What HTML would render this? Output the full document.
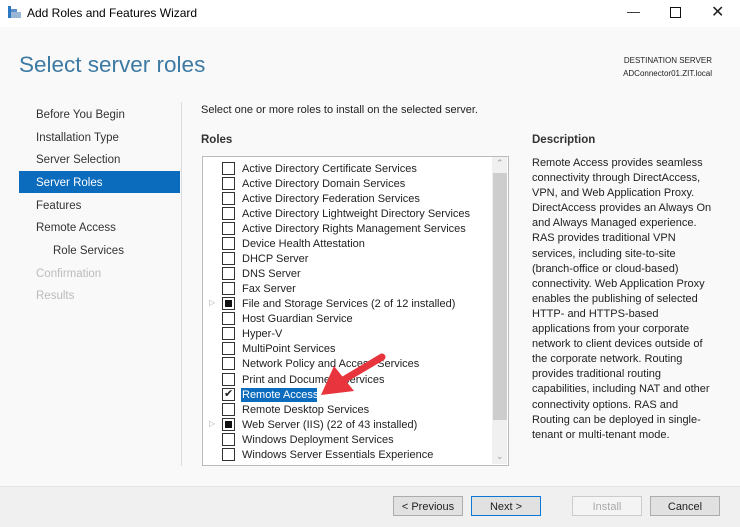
<!DOCTYPE html>
<html><head><style>
body{margin:0;width:740px;height:526px;overflow:hidden;background:#f9f9f9;font-family:"Liberation Sans",sans-serif;font-size:11px;color:#1e1e1e;position:relative}
.a{position:absolute;white-space:nowrap}
.tb{position:absolute;left:0;top:0;width:740px;height:27px;background:#fff}
.nav{position:absolute;left:36px;font-size:11.5px;color:#333}
.row{position:absolute;left:242px;font-size:11px;color:#222;margin-top:2px}
.cb{position:absolute;left:222px;width:11px;height:11px;border:1px solid #333;background:#fff}
.btn{position:absolute;top:496px;height:20px;border:1px solid #adadad;background:#e1e1e1;font-size:11px;text-align:center;line-height:20px;box-sizing:border-box}
</style></head><body>
<div class="tb"></div>
<svg class="a" style="left:8px;top:6px" width="14" height="13"><rect x="0" y="0" width="3" height="12" fill="#2b78c2"/><rect x="3" y="6" width="10" height="6" fill="#9ab8d6"/><rect x="3" y="3" width="6" height="3" fill="#5b8fc7"/></svg>
<div class="a" style="left:27px;top:6px;font-size:12px;color:#000">Add Roles and Features Wizard</div>
<div class="a" style="left:627px;top:4px;font-size:13px">&#8212;</div>
<div class="a" style="left:670px;top:7px;width:9px;height:9px;border:1px solid #111"></div>
<div class="a" style="left:711px;top:2px;font-size:16px">&#x2715;</div>
<div class="a" style="left:19px;top:52px;font-size:22.5px;color:#3d7aa3">Select server roles</div>
<div class="a" style="right:28px;top:54px;font-size:8px;text-align:right;line-height:13px">DESTINATION SERVER<br>ADConnector01.ZIT.local</div>
<div class="nav a" style="top:109px">Before You Begin</div>
<div class="nav a" style="top:132px">Installation Type</div>
<div class="nav a" style="top:154px">Server Selection</div>
<div class="a" style="left:19px;top:171px;width:161px;height:22px;background:#0b6bbd"></div>
<div class="nav a" style="top:177px;color:#fff">Server Roles</div>
<div class="nav a" style="top:200px">Features</div>
<div class="nav a" style="top:222px">Remote Access</div>
<div class="nav a" style="top:245px;left:53px">Role Services</div>
<div class="nav a" style="top:268px;color:#bbb">Confirmation</div>
<div class="nav a" style="top:290px;color:#bbb">Results</div>
<div class="a" style="left:181px;top:102px;width:1px;height:364px;background:#ddd"></div>
<div class="a" style="left:201px;top:104px;font-size:11px">Select one or more roles to install on the selected server.</div>
<div class="a" style="left:201px;top:134px;font-size:11.5px;font-weight:bold;color:#333">Roles</div>
<div class="a" style="left:532px;top:134px;font-size:11.5px;font-weight:bold;color:#333">Description</div>
<div class="a" style="left:202px;top:156px;width:305px;height:308px;border:1px solid #bbb;background:#fff"></div>
<div class="a" style="left:492px;top:157px;width:15px;height:307px;background:#f0f0f0"></div>
<div class="a" style="left:493px;top:173px;width:14px;height:247px;background:#cdcdcd"></div>
<div class="a" style="left:496px;top:158px;font-size:9px;color:#999">&#8963;</div>
<div class="a" style="left:496px;top:451px;font-size:9px;color:#999">&#8964;</div>
<div class="cb" style="top:162px"></div><div class="row a" style="top:161px">Active Directory Certificate Services</div>
<div class="cb" style="top:177px"></div><div class="row a" style="top:176px">Active Directory Domain Services</div>
<div class="cb" style="top:192px"></div><div class="row a" style="top:191px">Active Directory Federation Services</div>
<div class="cb" style="top:207px"></div><div class="row a" style="top:206px">Active Directory Lightweight Directory Services</div>
<div class="cb" style="top:222px"></div><div class="row a" style="top:221px">Active Directory Rights Management Services</div>
<div class="cb" style="top:237px"></div><div class="row a" style="top:236px">Device Health Attestation</div>
<div class="cb" style="top:252px"></div><div class="row a" style="top:251px">DHCP Server</div>
<div class="cb" style="top:267px"></div><div class="row a" style="top:266px">DNS Server</div>
<div class="cb" style="top:282px"></div><div class="row a" style="top:281px">Fax Server</div>
<div class="a" style="left:209px;top:298px;font-size:8px;color:#aaa">&#9655;</div>
<div class="cb" style="top:297px"></div><div class="a" style="left:225px;top:300px;width:7px;height:7px;background:#111"></div><div class="row a" style="top:296px">File and Storage Services (2 of 12 installed)</div>
<div class="cb" style="top:312px"></div><div class="row a" style="top:311px">Host Guardian Service</div>
<div class="cb" style="top:327px"></div><div class="row a" style="top:326px">Hyper-V</div>
<div class="cb" style="top:342px"></div><div class="row a" style="top:341px">MultiPoint Services</div>
<div class="cb" style="top:357px"></div><div class="row a" style="top:356px">Network Policy and Access Services</div>
<div class="cb" style="top:373px"></div><div class="row a" style="top:372px">Print and Document Services</div>
<div class="cb" style="top:388px"></div><div class="a" style="left:224px;top:387px;font-size:11px">&#10004;</div>
<div class="a" style="left:241px;top:388px;width:76px;height:14px;background:#0b6bbd"></div><div class="row a" style="top:387px;color:#fff">Remote Access</div>
<div class="cb" style="top:403px"></div><div class="row a" style="top:402px">Remote Desktop Services</div>
<div class="a" style="left:209px;top:419px;font-size:8px;color:#aaa">&#9655;</div>
<div class="cb" style="top:418px"></div><div class="a" style="left:225px;top:421px;width:7px;height:7px;background:#111"></div><div class="row a" style="top:417px">Web Server (IIS) (22 of 43 installed)</div>
<div class="cb" style="top:433px"></div><div class="row a" style="top:432px">Windows Deployment Services</div>
<div class="cb" style="top:448px"></div><div class="row a" style="top:447px">Windows Server Essentials Experience</div>
<svg class="a" style="left:0;top:0" width="740" height="526"><line x1="382" y1="357" x2="340" y2="382" stroke="#e8343c" stroke-width="7" stroke-linecap="round"/><polygon points="321,395 334,366 354,391" fill="#e8343c"/></svg>
<div class="a" style="left:532px;top:156px;font-size:11px;line-height:15.1px;color:#222;white-space:normal;width:180px">Remote Access provides seamless connectivity through DirectAccess, VPN, and Web Application Proxy. DirectAccess provides an Always On and Always Managed experience. RAS provides traditional VPN services, including site-to-site (branch-office or cloud-based) connectivity. Web Application Proxy enables the publishing of selected HTTP- and HTTPS-based applications from your corporate network to client devices outside of the corporate network. Routing provides traditional routing capabilities, including NAT and other connectivity options. RAS and Routing can be deployed in single-tenant or multi-tenant mode.</div>
<div class="a" style="left:0;top:486px;width:740px;height:40px;background:#f0f0f0;border-top:1px solid #e4e4e4"></div>
<div class="btn" style="left:393px;width:70px">&lt; Previous</div>
<div class="btn" style="left:471px;width:70px;border-color:#0b78d7">Next &gt;</div>
<div class="btn" style="left:572px;width:70px;background:#f4f4f4;border-color:#ccc;color:#aaa">Install</div>
<div class="btn" style="left:650px;width:70px">Cancel</div>
</body></html>
